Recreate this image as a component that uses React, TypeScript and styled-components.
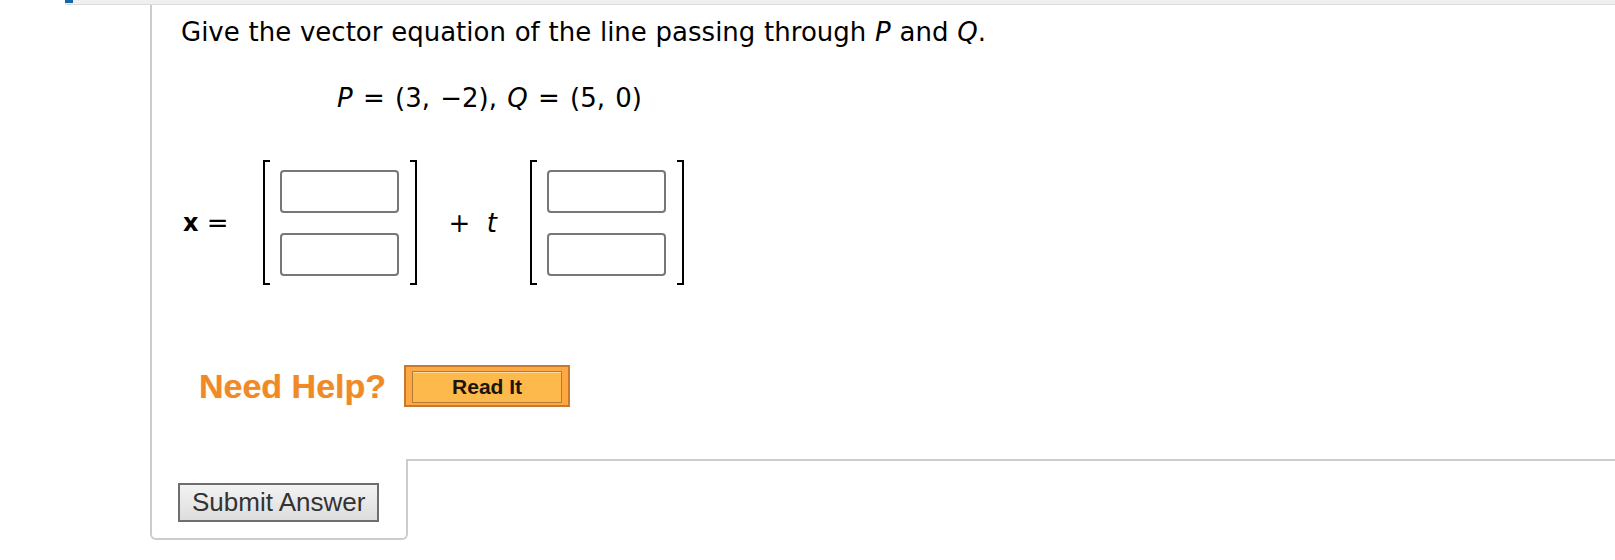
import styled, { createGlobalStyle } from "styled-components";

// Question card: WebAssign style vector line problem

const GlobalStyle = createGlobalStyle`
  body {
    margin: 0;
    background: #ffffff;
    font-family: "DejaVu Sans", Verdana, sans-serif;
    color: #000;
  }
`;

const TopBar = styled.div`
  display: flex;
  margin-left: 65px;
  height: 4px;
  background: #efefef;
  border-bottom: 1px solid #dcdcdc;
`;

const BlueMark = styled.div`
  width: 8px;
  height: 3px;
  background: #1767a8;
`;

const Card = styled.div`
  margin-left: 150px;
`;

const QuestionBody = styled.div`
  border-left: 2px solid #cccccc;
  padding: 12px 0 52px 29px;
`;

const Prompt = styled.div`
  font-size: 26px;
  line-height: 30px;
  word-spacing: 0.5px;
`;

const Given = styled.div`
  font-size: 26px;
  line-height: 30px;
  word-spacing: 2px;
  margin: 36px 0 0 156px;
`;

const Var = styled.i`
  font-style: italic;
`;

const EquationRow = styled.div`
  display: flex;
  align-items: center;
  margin-top: 47px;
  padding-left: 2px;
  font-size: 26px;
`;

const Label = styled.span<{ $gap: number; $lead?: number }>`
  display: inline-flex;
  align-items: center;
  margin-left: ${({ $lead }) => $lead ?? 0}px;
  margin-right: ${({ $gap }) => $gap}px;
  white-space: pre;
`;

const BoldX = styled.b`
  font-weight: bold;
  font-size: 24px;
`;

const Matrix = styled.div`
  display: flex;
  align-items: stretch;
  height: 125px;
`;

const Bracket = styled.div<{ $side: "left" | "right" }>`
  width: 5px;
  border: 2px solid #000;
  ${({ $side }) => ($side === "left" ? "border-right: none;" : "border-left: none;")}
`;

const Column = styled.div`
  display: flex;
  flex-direction: column;
  justify-content: center;
  gap: 20px;
  padding: 0 11px 0 10px;
`;

const Blank = styled.input`
  box-sizing: border-box;
  width: 119px;
  height: 43px;
  border: 2px solid #777777;
  border-radius: 4px;
  background: #fff;
  outline: none;
`;

const HelpRow = styled.div`
  display: flex;
  align-items: center;
  gap: 18px;
  margin: 80px 0 0 18px;
`;

const NeedHelp = styled.span`
  font-family: "Liberation Sans", Arial, sans-serif;
  font-weight: bold;
  font-size: 34px;
  color: #f08a27;
  text-shadow: 0 0 1px rgba(240, 138, 39, 0.5);
`;

const ReadIt = styled.button`
  box-sizing: border-box;
  width: 166px;
  height: 42px;
  padding: 4px 6px;
  border: 2px solid #c77a2d;
  background: #fca944;
  cursor: pointer;
`;

const ReadItFace = styled.span`
  display: flex;
  align-items: center;
  justify-content: center;
  height: 100%;
  border: 1px solid #b57b35;
  background: #fdb94c;
  box-shadow: inset 0 1px 0 #fedaa4;
  font-family: "Liberation Sans", Arial, sans-serif;
  font-weight: bold;
  font-size: 21px;
  color: #1e1408;
`;

const Footer = styled.div`
  display: flex;
  align-items: flex-start;
`;

const SubmitArea = styled.div`
  box-sizing: border-box;
  width: 258px;
  padding: 24px 0 16px 26px;
  border: 2px solid #cccccc;
  border-top: none;
  border-radius: 0 0 6px 6px;
`;

const SubmitButton = styled.button`
  box-sizing: border-box;
  height: 39px;
  padding: 0 12px;
  border: 2px solid #6e6e6e;
  background: linear-gradient(#f3f3f3, #dddddd);
  font-family: "Liberation Sans", Arial, sans-serif;
  font-size: 26px;
  color: #333;
  cursor: pointer;
`;

const Filler = styled.div`
  flex: 1;
  border-top: 2px solid #cccccc;
`;

const Vector = ({ name }: { name: string }) => (
  <Matrix>
    <Bracket $side="left" />
    <Column>
      <Blank aria-label={`${name} 1`} />
      <Blank aria-label={`${name} 2`} />
    </Column>
    <Bracket $side="right" />
  </Matrix>
);

export default function App() {
  return (
    <>
      <GlobalStyle />
      <TopBar>
        <BlueMark />
      </TopBar>
      <Card>
        <QuestionBody>
          <Prompt>
            Give the vector equation of the line passing through <Var>P</Var> and <Var>Q</Var>.
          </Prompt>
          <Given>
            <Var>P</Var> = (3, −2), <Var>Q</Var> = (5, 0)
          </Given>
          <EquationRow>
            <Label $gap={34}>
              <BoldX>x</BoldX> =
            </Label>
            <Vector name="point" />
            <Label $gap={33} $lead={32}>
              + <Var> t</Var>
            </Label>
            <Vector name="direction" />
          </EquationRow>
          <HelpRow>
            <NeedHelp>Need Help?</NeedHelp>
            <ReadIt>
              <ReadItFace>Read It</ReadItFace>
            </ReadIt>
          </HelpRow>
        </QuestionBody>
        <Footer>
          <SubmitArea>
            <SubmitButton>Submit Answer</SubmitButton>
          </SubmitArea>
          <Filler />
        </Footer>
      </Card>
    </>
  );
}
